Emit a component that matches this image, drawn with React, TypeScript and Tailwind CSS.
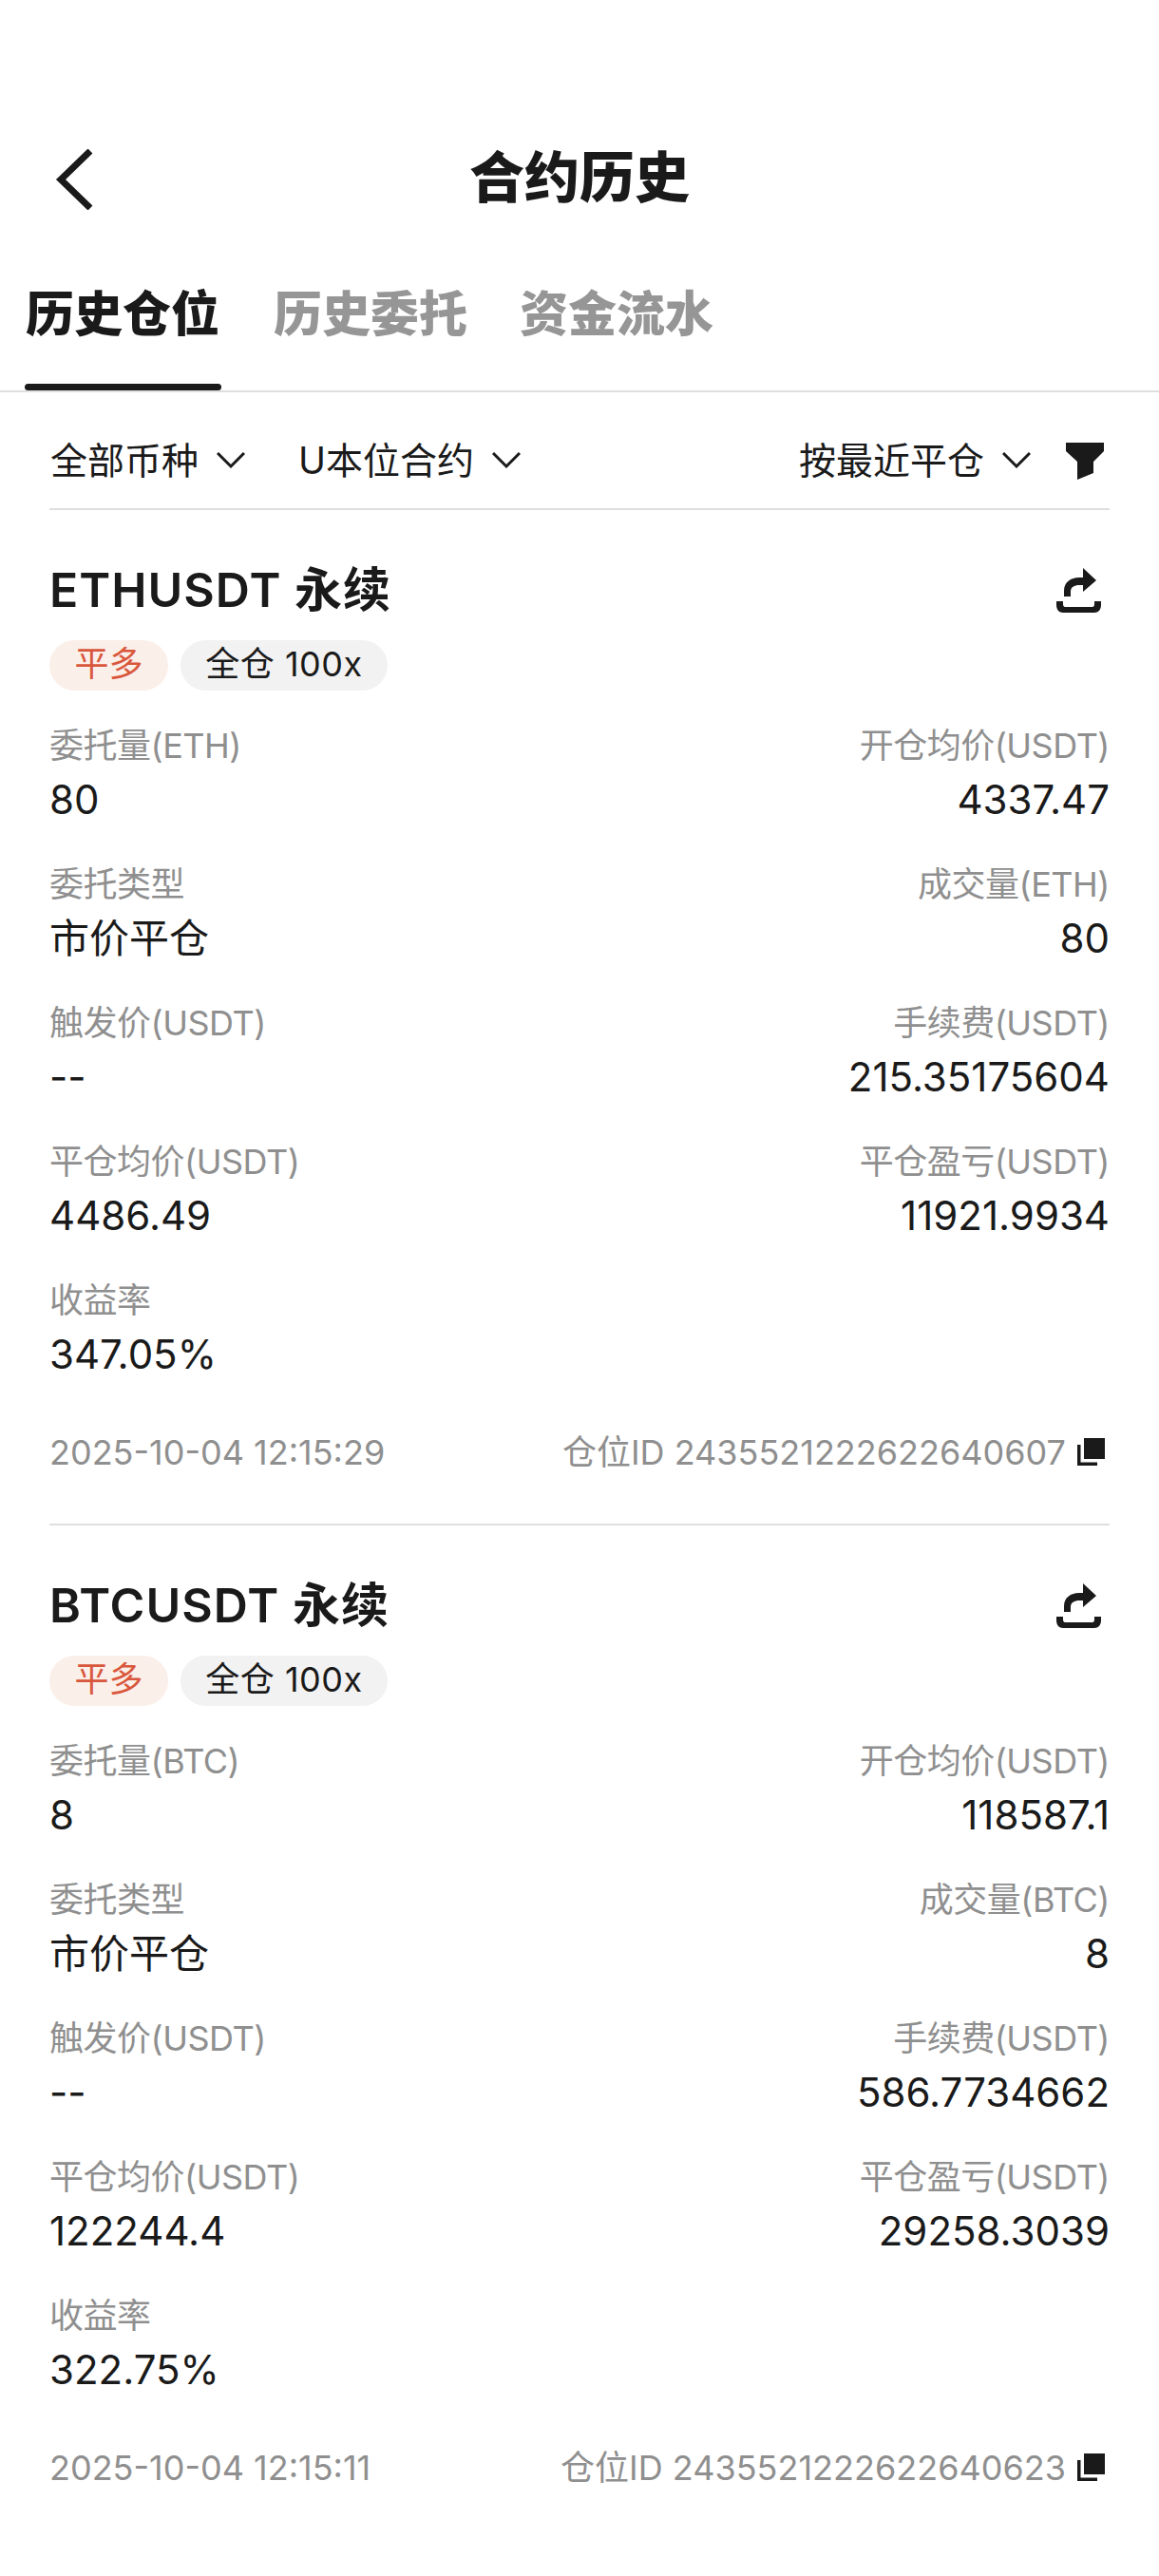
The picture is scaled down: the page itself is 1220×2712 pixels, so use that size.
import React from 'react';

const FONT = "font-['Inter','Noto_Sans_CJK_SC',sans-serif]";

type Row = { label: string; value: string };

type Position = {
  symbol: string;
  rows: [Row, Row | null][];
  time: string;
  id: string;
};

const POSITIONS: Position[] = [
  {
    symbol: 'ETHUSDT 永续',
    rows: [
      [{ label: '委托量(ETH)', value: '80' }, { label: '开仓均价(USDT)', value: '4337.47' }],
      [{ label: '委托类型', value: '市价平仓' }, { label: '成交量(ETH)', value: '80' }],
      [{ label: '触发价(USDT)', value: '--' }, { label: '手续费(USDT)', value: '215.35175604' }],
      [{ label: '平仓均价(USDT)', value: '4486.49' }, { label: '平仓盈亏(USDT)', value: '11921.9934' }],
      [{ label: '收益率', value: '347.05%' }, null],
    ],
    time: '2025-10-04 12:15:29',
    id: '仓位ID 2435521222622640607',
  },
  {
    symbol: 'BTCUSDT 永续',
    rows: [
      [{ label: '委托量(BTC)', value: '8' }, { label: '开仓均价(USDT)', value: '118587.1' }],
      [{ label: '委托类型', value: '市价平仓' }, { label: '成交量(BTC)', value: '8' }],
      [{ label: '触发价(USDT)', value: '--' }, { label: '手续费(USDT)', value: '586.7734662' }],
      [{ label: '平仓均价(USDT)', value: '122244.4' }, { label: '平仓盈亏(USDT)', value: '29258.3039' }],
      [{ label: '收益率', value: '322.75%' }, null],
    ],
    time: '2025-10-04 12:15:11',
    id: '仓位ID 2435521222622640623',
  },
];

function Chevron() {
  return (
    <svg width="30" height="18" viewBox="0 0 30 18" fill="none" className="shrink-0 ml-[19px]">
      <path d="M1 1l14 14L29 1" stroke="#1a1a1a" strokeWidth="3" />
    </svg>
  );
}

function ShareIcon() {
  return (
    <svg width="47" height="47" viewBox="0 0 47 47" fill="#1a1a1a" className="shrink-0">
      <path d="M28 0L42 13L28 25V18H24C19 18 15 20 15 25V30H8V24C8 15 15 10 24 10H28Z" />
      <path d="M0 35H7V38C7 40 8 41 9 41H38C39 41 40 40 40 38V35H47V39C47 44 44 47 40 47H7C3 47 0 44 0 39Z" />
    </svg>
  );
}

function CopyIcon() {
  return (
    <svg width="30" height="30" viewBox="0 0 30 30" fill="#1a1a1a" className="shrink-0">
      <rect x="7" y="0" width="22" height="22" />
      <path d="M0 7h3.5v18.5H21V29H0z" />
    </svg>
  );
}

function Cell({ row, right }: { row: Row; right?: boolean }) {
  return (
    <div className={right ? 'text-right' : ''}>
      <div className="text-[36px] leading-[52px] tracking-[-0.5px] text-[#8f8f8f]">{row.label}</div>
      <div className="text-[42px] leading-[62px] text-[#1a1a1a]">{row.value}</div>
    </div>
  );
}

function PositionCard({ p }: { p: Position }) {
  return (
    <div className="mx-[52px] border-b-2 last:border-b-0 border-[#dfdfdf] pt-[54px] pb-[50px]">
      <div className="flex items-center justify-between pr-[9px] h-[60px]">
        <span className="text-[50px] leading-[60px] tracking-[1px] font-semibold text-[#1a1a1a]">{p.symbol}</span>
        <ShareIcon />
      </div>
      <div className="flex gap-[13px] mt-[23px]">
        <span className="w-[125px] h-[53px] rounded-[27px] bg-[#fbefe9] text-[#d9573c] text-[36px] leading-[50px] text-center">平多</span>
        <span className="w-[218px] h-[53px] rounded-[27px] bg-[#f2f2f2] text-[#1a1a1a] text-[36px] leading-[50px] tracking-[0.5px] text-center">全仓 100x</span>
      </div>
      <div className="flex flex-col gap-[32px] mt-[32px]">
        {p.rows.map((row, i) => (
          <div key={i} className="flex justify-between">
            <Cell row={row[0]} />
            {row[1] && <Cell row={row[1]} right />}
          </div>
        ))}
      </div>
      <div className="flex items-center justify-between mt-[47px] h-[50px] text-[36px] leading-[50px] text-[#8f8f8f]">
        <span>{p.time}</span>
        <div className="flex items-center gap-3 pr-[4px]">
          <span>{p.id}</span>
          <CopyIcon />
        </div>
      </div>
    </div>
  );
}

export default function App() {
  return (
    <div className={`${FONT} w-[1220px] h-[2712px] overflow-hidden bg-white`}>
      {/* Header */}
      <div className="relative flex items-center justify-center h-[76px] mt-[149px]">
        <svg width="44" height="64" viewBox="0 0 44 64" fill="none" className="absolute left-[56px] top-[8px]">
          <path d="M39 2L8 32l31 30" stroke="#1a1a1a" strokeWidth="7" />
        </svg>
        <h1 className="text-[58px] leading-[76px] font-black text-[#1a1a1a]">合约历史</h1>
      </div>

      {/* Tabs */}
      <div className="flex gap-[55px] mt-[69px] pt-[2px] px-[26px] border-b-2 border-[#dfdfdf] h-[119px]">
        <div className="relative w-[207px] h-[115px] pl-px text-[51px] leading-[70px] font-black text-[#1a1a1a] whitespace-nowrap">
          历史仓位
          <div className="absolute left-0 right-0 bottom-0 h-[7px] rounded-full bg-[#1a1a1a]" />
        </div>
        <div className="text-[51px] leading-[70px] font-black text-[#969696]">历史委托</div>
        <div className="text-[51px] leading-[70px] font-black text-[#969696]">资金流水</div>
      </div>

      {/* Filters */}
      <div className="flex items-center mx-[52px] h-[124px] pt-[22px] pl-px border-b-2 border-[#dfdfdf] text-[39px] text-[#1a1a1a]">
        <span>全部币种</span>
        <Chevron />
        <span className="ml-[56px]">U本位合约</span>
        <Chevron />
        <span className="ml-auto">按最近平仓</span>
        <Chevron />
        <svg width="40" height="39" viewBox="0 0 40 39" fill="#1a1a1a" className="ml-[37px] mr-[6px]">
          <path d="M0 0H40V9L29 20V32L12 39V20L0 9Z" />
        </svg>
      </div>

      {POSITIONS.map(p => (
        <PositionCard key={p.symbol} p={p} />
      ))}
    </div>
  );
}
